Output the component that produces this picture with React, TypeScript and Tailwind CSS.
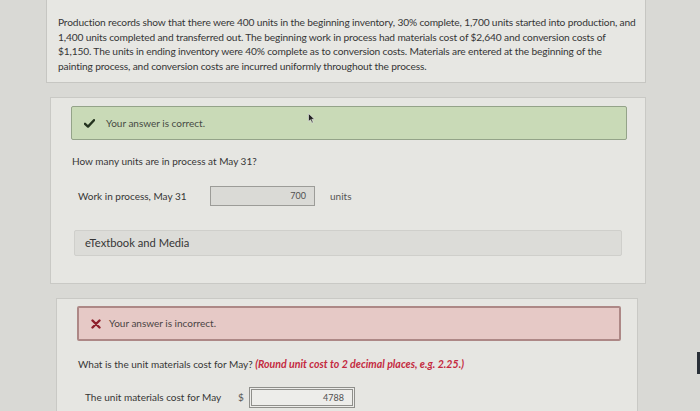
import React from 'react';

function Check() {
  return (
    <svg width="11" height="9" viewBox="0 0 11 9" className="shrink-0">
      <path d="M1 4.8 L4 7.6 L10 1.2" fill="none" stroke="#24331f" strokeWidth="2.4" strokeLinecap="round" strokeLinejoin="round" />
    </svg>
  );
}

function Cross() {
  return (
    <svg width="10" height="10" viewBox="0 0 10 10" className="shrink-0">
      <path d="M1.5 1.5 L8.5 8.5 M8.5 1.5 L1.5 8.5" fill="none" stroke="#8e1f2c" strokeWidth="2.4" strokeLinecap="round" />
    </svg>
  );
}

export default function App() {
  return (
    <div className="relative w-[700px] h-[411px] overflow-hidden bg-[#d9d9d5] font-['Lato',sans-serif] text-[#363636]">
      {/* problem statement */}
      <div className="ml-[46px] w-[600px] bg-[#e7e7e3] border-x border-b border-[#c6c6c2] pl-[11px] pr-[4px] pt-[15px] pb-[9px] text-[10.2px] leading-[14.5px] tracking-[-0.15px] whitespace-nowrap">
        Production records show that there were 400 units in the beginning inventory, 30% complete, 1,700 units started into production, and
        <br />
        1,400 units completed and transferred out. The beginning work in process had materials cost of $2,640 and conversion costs of
        <br />
        $1,150. The units in ending inventory were 40% complete as to conversion costs. Materials are entered at the beginning of the
        <br />
        painting process, and conversion costs are incurred uniformly throughout the process.
      </div>

      {/* first question */}
      <div className="mt-[14px] ml-[50px] w-[596px] h-[187px] bg-[#e6e6e2] border border-[#c9c9c5] pl-[20px] pr-[18px] pt-[8px]">
        <div className="h-[34px] bg-[#c9dab7] border border-[#94a389] rounded-[2px] flex items-center pl-[12px] gap-[11px] text-[10px] text-[#474a44]">
          <Check />
          <span>Your answer is correct.</span>
        </div>
        <p className="mt-[14px] text-[10px] leading-[14px] pl-[1px]">How many units are in process at May 31?</p>
        <div className="mt-[18px] flex items-center h-[20px] text-[10px]">
          <span className="pl-[7px] w-[139px]">Work in process, May 31</span>
          <div className="w-[105px] h-[20px] bg-[#dadad6] border border-[#9c9c98] flex items-center justify-end pr-[8px] text-[9px] text-[#505050]">700</div>
          <span className="ml-[15px] text-[10px] text-[#555]">units</span>
        </div>
        <div className="mt-[24px] ml-[3px] w-[548px] h-[26px] bg-[#dcdcd8] border border-[#cfcfcb] rounded-[2px] flex items-center pl-[10px] text-[11.2px]">
          eTextbook and Media
        </div>
      </div>

      {/* second question */}
      <div className="mt-[14px] ml-[56px] w-[582px] h-[130px] bg-[#e6e6e2] border border-[#c9c9c5] pl-[20px] pr-[16px] pt-[7px]">
        <div className="h-[35px] bg-[#e6c9c6] border-2 border-[#ad8886] rounded-[2px] flex items-center pl-[12px] gap-[8px] text-[10px] text-[#4a4444]">
          <Cross />
          <span>Your answer is incorrect.</span>
        </div>
        <p className="mt-[16px] text-[10px] leading-[14px] pl-[1px] whitespace-nowrap">
          What is the unit materials cost for May?{' '}
          <span className="font-bold italic text-[10.6px] text-[#c42a3f]">(Round unit cost to 2 decimal places, e.g. 2.25.)</span>
        </p>
        <div className="mt-[16px] flex items-center h-[21px] text-[10px]">
          <span className="pl-[8px] w-[161px]">The unit materials cost for May</span>
          <span className="w-[11px] text-[10px] text-[#555]">$</span>
          <div className="w-[106px] h-[21px] bg-[#ededea] border-[3px] border-double border-[#8f8f8b] flex items-center justify-end pr-[8px] text-[9px] text-[#505050]">4788</div>
        </div>
      </div>

      {/* mouse pointer */}
      <svg className="absolute left-[308px] top-[113px]" width="7" height="11" viewBox="0 0 7 11">
        <path d="M0.5 0.5 L0.5 8.5 L2.5 6.8 L4 10 L5.2 9.4 L3.8 6.3 L6.5 6.2 Z" fill="#222" stroke="#eee" strokeWidth="0.6" />
      </svg>

      {/* edge of window */}
      <div className="absolute right-0 top-[352px] w-[3px] h-[22px] bg-[#2a3038]" />
    </div>
  );
}
